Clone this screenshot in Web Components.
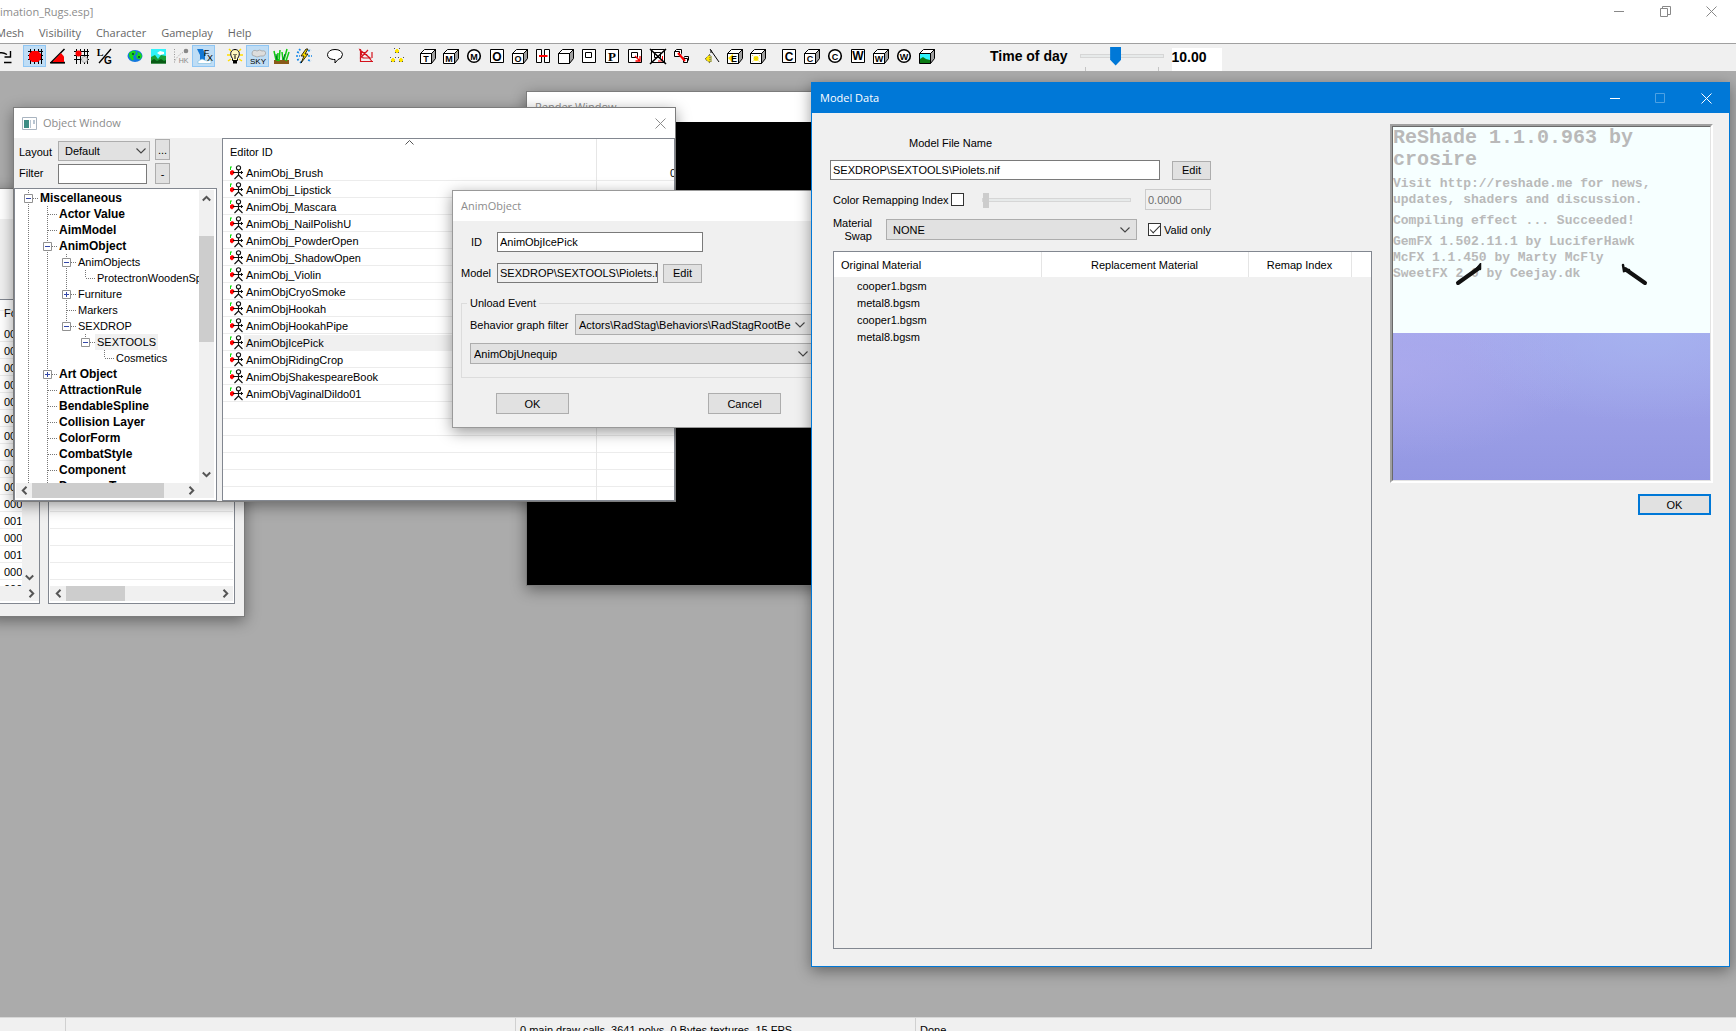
<!DOCTYPE html>
<html lang="en">
<head>
<meta charset="utf-8">
<title>Creation Kit</title>
<style>
html,body{margin:0;height:100%;overflow:hidden}
body{font:11px/14px "Liberation Sans",Arial,sans-serif;color:#000;--face:#f0f0f0;--edge:#828790;--accent:#0078d7;--ui:"Open Sans","Noto Sans",sans-serif}
</style>
</head>
<body>
<kit-app></kit-app>
<script>
const controls = `
*{box-sizing:border-box}
button,input,select{font:inherit;color:inherit;border-radius:0;margin:0;appearance:none;outline:none;min-width:0}
button{background:#e1e1e1;border:1px solid #adadad;padding:0}
input[type=text]{background:#fff;border:1px solid #7a7a7a;padding:0 0 0 2px;height:20px}
input[readonly]{background:var(--face)}
input[type=text]:disabled{border-color:#ccc;background:var(--face);color:#6d6d6d}
select{background:#e1e1e1;border:1px solid #adadad;padding:0 18px 0 6px;height:21px;width:100%}
label{white-space:nowrap}
.combo{display:grid}
.combo>*{grid-area:1/1}
.combo svg{width:10px;height:6px;justify-self:end;align-self:center;margin-right:7px;pointer-events:none}
input[type=checkbox]{width:13px;height:13px;border:1px solid #333;background:#fff;display:grid;place-items:center;flex:none}
input[type=checkbox]:checked::after{content:"";width:9px;height:4px;border:solid #333;border-width:0 0 1px 1px;transform:rotate(-45deg) translate(1px,-1px)}
`;
const chevron = `<svg viewBox="0 0 10 6"><path d="M.5 .5 5 5 9.5 .5" fill="none" stroke="#444" stroke-width="1.1"/></svg>`;

function define(name, css, html, setup) {
  const tpl = document.createElement('template');
  tpl.innerHTML = `<style>${controls}${css}</style>${html}`;
  customElements.define(name, class extends HTMLElement {
    connectedCallback() {
      if (this.shadowRoot) return;
      const root = this.attachShadow({mode: 'open'});
      root.append(tpl.content.cloneNode(true));
      if (setup) setup(this, root);
    }
  });
}

/* ---------- toolbar glyphs ---------- */
const txt = (s, x, y, size, w = 'bold', f = 'Liberation Sans') =>
  `<text x="${x}" y="${y}" font-size="${size}" font-weight="${w}" font-family="${f}" text-anchor="middle" fill="#000">${s}</text>`;
const cube = (inner, front = '#fff') =>
  `<path d="M.5 5.5 4.5 1.5h11l-4 4z" fill="#fff"/><path d="M11.5 5.5l4-4v9l-4 5z" fill="#a0a0a0"/><path d="M.5 5.5h11v10H.5z" fill="${front}"/><path d="M.5 5.5 4.5 1.5h11l-4 4zM11.5 5.5l4-4v9l-4 5zM.5 5.5h11v10H.5z" fill="none" stroke="#000"/>${inner}`;
const box = inner => `<path d="M1.5 1.5h13v13h-13z" fill="#fff" stroke="#000"/>${inner}`;
const ring = s => `<circle cx="8" cy="8" r="6.3" fill="#fff" stroke="#000" stroke-width="1.6"/>${txt(s, 8, 11.5, 9)}`;
const grid = `<path d="M1 3.5h15M1 7.5h15M1 11.5h15M3.5 1v15M7.5 1v15M11.5 1v15M14.5 1v15" stroke="#000" fill="none"/>`;
const star = (x, y) => `<path d="M${x-3} ${y-3}l6 6M${x+3} ${y-3}l-6 6" stroke="#111" stroke-dasharray="1 2"/><path d="M${x-2} ${y}h4M${x} ${y-2}v4" stroke="#ffe600" stroke-width="2"/>`;
const glyphs = {
  redo: `<path d="M-1 8.5Q4 2 11 6.500M14.500 3v6h-6M8 14.500h7.500M1 14.500h3" fill="none" stroke="#000" stroke-width="1.400"/>`,
  snap: grid + `<path d="M5 3h6l3 3v5l-3 3H5l-3-3V6z" fill="#f00"/>`,
  angle: `<path d="M1 14.500 14.500 1M1 14.500h14" stroke="#000" stroke-width="1.500"/><path d="M2.500 14 11 5l3 3.500V14z" fill="#f00"/><path d="M0 14h15v1.500H0z"/>`,
  ref: grid + `<circle cx="5.500" cy="5.500" r="3" fill="#f00"/><circle cx="11.500" cy="11.500" r="3" fill="#ddd" stroke="#999" stroke-width=".6"/>`,
  lg: txt('L', 4, 7.5, 10, 'bold', 'Liberation Serif') + txt('G', 12, 15.5, 10) + `<path d="M15 1 3 15" stroke="#000" stroke-width="1.300"/>`,
  globe: `<ellipse cx="8" cy="8" rx="7.500" ry="6" fill="#1377e0"/><path d="M2 5l4-2.500 3 1-1 3-2 2 1 3-2 1-3-4zM10 3.500l4 2 1 3-2 3-3-1-1-3 2-1z" fill="#18d818"/><path d="M5 5h2v2H5zM11 8h2v2h-2z" fill="#063"/>`,
  land: `<path d="M1 1h15v14H1z" fill="#2ff3fb"/><path d="M7 5l3-2 4 1v2l-4 1z" fill="#fff"/><path d="M1 9l4-2 3 4 3-4 5 1v7.500H1z" fill="#18a038"/><path d="M1 13l3-2 3 2 4-2 3 2 2-1v3.500H1z" fill="#075a14"/>`,
  hk: `<path d="M1.500 1v14M2 12.500q5-8 10-8.500" stroke="#999" stroke-dasharray="1 1.500" fill="none"/><circle cx="13" cy="3" r="2.300" fill="#888"/><text x="10.500" y="15" font-size="7" text-anchor="middle" fill="#888" font-family="Liberation Sans">HK</text>`,
  fx: `<path d="M1 1h6l2 5v9H4V7z" fill="#1377d4"/><path d="M2 13l4-2 5 2 4-1v3.500H2z" fill="#fff" stroke="#7bd" stroke-width=".6"/>` + txt('F', 10.5, 7.5, 9, 'normal') + txt('X', 14, 13, 9, 'normal'),
  bulb: `<path d="M2 1l2 2M14 1l-2 2M0 7h3M13 7h3M1 13l3-2M15 13l-3-2" stroke="#fd0" stroke-width="1.500"/><path d="M5.500 10.500C2 6 4 1.500 8 1.500S14 6 10.500 10.500v2h-5z" fill="#fff8c0" stroke="#000"/><path d="M6.500 6l1.500 1.500L9.500 6M8 8v3" stroke="#000" fill="none"/><path d="M6 13h4v2.500H6z"/>`,
  sky: `<path d="M2 5q1-4 5-2 3-2 5 0 4-1 3.500 3-1 3-5 2-4 2-6 0-3 0-2.500-3z" fill="#ddd" stroke="#999" stroke-width=".7"/>` + txt('SKY', 8, 15.5, 8, 'normal'),
  grass: `<path d="M1 12h15v4H1z" fill="#8a5a1a"/><path d="M1 3l2 9M5 5l-1 8M7 2l-1 11M9 4l1 8M14 1l-3 11M16 4l-3 9M2 8l4 5" stroke="#1c1" stroke-width="1.500"/><path d="M3 6l1 6M12 6l-2 6" stroke="#063"/>`,
  bolt: `<path d="M1 4l3 1M0 8h4M1 12l3-1M12 3l3-1M12 8h4M12 12l3 1M3 1l2 2M4 15l2-2" stroke="#1688e8" stroke-width="1.600" stroke-dasharray="2 1"/><path d="M10 1 5 8h3l-3 7 7-9H9l3-5z" fill="#fd0" stroke="#000" stroke-width=".8"/>`,
  bubble: `<path d="M6.500 11.500Q.5 11 .5 6.500 1.500 1.500 8 1.500t7.500 5Q15 11 11 11.500L8 15V11.500z" fill="#fff" stroke="#000"/>`,
  red: `<path d="M2.500 1v13M2 13.500h13M2 4.500h5l7 9M14 4v6M2 10.500 10 2M2 2l10 8H5z" fill="none" stroke="#d4121c" stroke-width="1.200"/>`,
  stars: star(8, 3) + star(4, 12) + star(12, 12),
  ct: cube(txt('T', 6, 14, 9)), cm: cube(txt('M', 6, 14, 9)), rm: ring('M'),
  bo: box(txt('O', 8, 12.5, 12)), co: cube(txt('O', 6, 14, 9)),
  join: `<path d="M1.500 1.500h5v13h-5zM9.500 1.500h5v13h-5z" fill="#fff" stroke="#000"/><path d="M4 8h8.500" stroke="#f00" stroke-width="2"/>`,
  c: cube(''), sq: box(`<path d="M4.500 4.500h6v5h-6z" fill="none" stroke="#000"/>`),
  bp: box(txt('P', 8, 12.5, 13, 'bold', 'Liberation Serif')),
  sr: box(`<path d="M4.500 4.500h6v5h-6z" fill="none" stroke="#000"/><path d="M8 8l4.500 4.500M13 8v5H8.500" stroke="#f00" fill="none" stroke-width="1.300"/>`),
  sx: box(`<path d="M4.500 4.500h6v5h-6z" fill="none" stroke="#000"/><path d="M8 13h4.500V8" stroke="#f00" fill="none"/><path d="M0 1l16 15M16 1 0 16" stroke="#000" stroke-width="1.600"/>`),
  chain: `<path d="M1.500 3.500h5v5h-5zM1.500 3.500l2-2h5v4l-2 3M10.500 10.500h4v4h-4zM10.500 10.500l1-2h4v4" fill="#fff" stroke="#000"/><path d="M5 5l7 8" stroke="#f00" stroke-width="2"/>`,
  cone: `<path d="M6 1l9 13" stroke="#000"/><path d="M7 2v3" stroke="#000"/><path d="M1 11l5-5v9z" fill="#ffe600" stroke="#444" stroke-dasharray="1 1"/><path d="M7 8v6" stroke="#880"/>`,
  cl: cube(`<path d="M1 10l5-4v9z" fill="#ffe600"/>` + txt('E', 7, 14, 9)),
  cs: cube(`<circle cx="6" cy="10.500" r="2.500" fill="#ffe600"/><path d="M2 7l8 7M10 7l-8 7" stroke="#cb0" stroke-dasharray="1 1.500"/>`),
  bc: box(txt('C', 8, 12.5, 12)), cc: cube(txt('C', 6, 14, 9)), rc: ring('C'),
  bw: box(txt('W', 8, 12, 12)), cw: cube(txt('W', 6, 14, 9)), rw: ring('W'),
  cland: cube(`<path d="M1 11l3-2 3 2 4 1v3H1z" fill="#0a7a14"/>`, '#2ff3fb')
};
define('tool-icon', `:host{display:block}
button{display:grid;place-items:center;width:23px;height:22px;background:none;border:1px solid transparent}
:host([on]) button{background:#bfddf5;border-color:#8fc6f4}
svg{width:16px;height:16px;overflow:visible}`,
  `<button><svg viewBox="0 0 16 16"></svg></button>`,
  (el, r) => {
    r.querySelector('svg').innerHTML = glyphs[el.getAttribute('name')];
    r.querySelector('button').setAttribute('aria-label', el.getAttribute('name'));
  });

define('tool-bar', `:host{display:flex;align-items:flex-start;height:28px;background:var(--face);border-top:1px solid #a0a0a0;overflow:hidden}
.icons{display:flex;gap:8px;padding-top:1px;margin-left:-8px;flex:none}
.g{display:flex}
label,output{font-weight:bold;font-size:14px;line-height:24px}
label{padding:0 12px 0 52px}
.slide{display:flex;flex-direction:column;width:84px}
.ticks{display:flex;justify-content:space-between;padding:0 5px;height:5px}
.ticks i{width:1px;background:#c4c4c4}
input{width:84px;height:23px;background:none;display:block}
input::-webkit-slider-runnable-track{height:4px;border:1px solid #d6d6d6;background:#e7eaea}
input::-webkit-slider-thumb{appearance:none;width:11px;height:19px;margin-top:-8px;background:var(--accent);clip-path:polygon(0 0,100% 0,100% 70%,50% 100%,0 70%)}
output{background:#fff;width:50px;height:24px;line-height:18px;margin:4px 0 0 8px;align-self:flex-start}`,
  `<div class="icons"></div><label for="tod">Time of day</label>
   <div class="slide"><input id="tod" type="range" min="0" max="24" step="0.1" value="10"><div class="ticks"><i></i><i></i></div></div><output for="tod">10.00</output>`,
  (el, r) => {
    const groups = ['redo', 'snap* angle ref lg', 'globe land hk fx*', 'bulb sky* grass bolt', 'bubble', 'red', 'stars',
      'ct cm rm bo co join c sq bp sr sx chain', 'cone cl cs', 'bc cc rc bw cw rw cland'];
    r.querySelector('.icons').innerHTML = groups.map(g => `<div class="g">${g.split(' ').map(n =>
      `<tool-icon name="${n.replace('*', '')}"${n.endsWith('*') ? ' on' : ''}></tool-icon>`).join('')}</div>`).join('');
  });

/* ---------- window frame ---------- */
define('win-frame', `:host{display:flex;flex-direction:column;box-sizing:border-box;border:1px solid #7c7c7c;background:var(--face);box-shadow:0 4px 14px rgba(0,0,0,.4)}
header{display:flex;align-items:center;height:30px;background:#fff;color:#8c8c8c;font:11px/16px var(--ui);padding-left:8px;flex:none}
:host([icon]) header{padding-left:8px}
.ico{display:none;width:15px;height:13px;margin-right:6px}
:host([icon]) .ico{display:block}
h2{font:inherit;margin:0;flex:1;white-space:nowrap}
:host([active]){border-color:var(--accent)}
:host([active]) header{background:var(--accent);color:#fff}
.b{display:none;width:45px;height:30px;place-items:center;background:none;border:0}
.close{width:30px}
:host([closable]) .close,:host([active]) .b{display:grid}
:host([active]) .close{width:46px}
svg{display:block;width:11px;height:11px;fill:none;stroke:currentColor}
.max{opacity:.3}
.body{flex:1;display:flex;min-height:0}
::slotted(*){flex:1;min-width:0}`,
  `<header><svg class="ico" style="width:15px" viewBox="0 0 15 13"><path d="M.5.500h14v12H.500z" fill="#fff" stroke="#a9b4c0"/><path d="M2 3h5v8H2z" fill="#3c8c84" stroke="none"/><path d="M8 3h1v8H8zM11 3h2v4h-2z" fill="#b9c6d2" stroke="none"/></svg>
   <h2></h2>
   <button class="b" aria-label="Minimize"><svg viewBox="0 0 11 11"><path d="M0 5.500h10"/></svg></button>
   <button class="b max" aria-label="Maximize"><svg viewBox="0 0 11 11"><path d="M.5.500h9v9h-9z"/></svg></button>
   <button class="b close" aria-label="Close"><svg viewBox="0 0 11 11"><path d="M.5.500l10 10M10.500.500l-10 10"/></svg></button>
   </header><div class="body"><slot></slot></div>`,
  (el, r) => { r.querySelector('h2').textContent = el.getAttribute('caption') || ''; });

/* ---------- scroll bar ---------- */
define('scroll-bar', `:host{display:flex;background:var(--face);height:15px;flex:none}
:host([vertical]){flex-direction:column;width:15px;height:auto}
button{width:16px;height:15px;background:none;border:0;display:grid;place-items:center;flex:none}
:host([vertical]) button{width:15px;height:17px}
:host([vertical]) svg{transform:rotate(90deg)}
svg{width:7px;height:9px;fill:none;stroke:#555;stroke-width:2}
.t{flex:1;display:flex;min-width:0;min-height:0}
:host([vertical]) .t{flex-direction:column}
i{background:#cdcdcd;flex:none}`,
  `<button aria-label="Back"><svg viewBox="0 0 7 9"><path d="M5.500.800 1.800 4.500 5.500 8.200"/></svg></button><div class="t"><i></i></div><button aria-label="Forward"><svg viewBox="0 0 7 9"><path d="M1.500.800 5.200 4.500 1.500 8.200"/></svg></button>`,
  (el, r) => {
    const i = r.querySelector('i'), v = el.hasAttribute('vertical'), size = el.getAttribute('thumb') || 0;
    i.style[v ? 'marginTop' : 'marginLeft'] = (el.getAttribute('at') || 0) + 'px';
    i.style[v ? 'height' : 'width'] = size + 'px';
  });

/* ---------- tree ---------- */
const treeRows = [
  ['M', 'Miscellaneous', 1], ['|T', 'Actor Value', 1], ['|T', 'AimModel', 1], ['|M', 'AnimObject', 1],
  ['||M', 'AnimObjects'], ['|||L', 'ProtectronWoodenSpoon'], ['||P', 'Furniture'], ['||T', 'Markers'],
  ['||m', 'SEXDROP'], ['|| m', 'SEXTOOLS', 2], ['||  L', 'Cosmetics'], ['|P', 'Art Object', 1],
  ['|T', 'AttractionRule', 1], ['|T', 'BendableSpline', 1], ['|T', 'Collision Layer', 1], ['|T', 'ColorForm', 1],
  ['|T', 'CombatStyle', 1], ['|T', 'Component', 1], ['|T', 'Damage Type', 1]];
const treeCell = c => {
  const dash = 'stroke="#777" stroke-dasharray="1 1" fill="none"';
  let s = '';
  if ('|TMP'.includes(c)) s += `<path d="M9.500 0v16" ${dash}/>`;
  if ('Lm'.includes(c)) s += `<path d="M9.500 0v8" ${dash}/>`;
  if ('TLMPm'.includes(c)) s += `<path d="M10 8.500h9" ${dash}/>`;
  if ('MPm'.includes(c)) s += `<path d="M5.500 4.500h8v8h-8z" fill="#fff" stroke="#919191"/><path d="M7 8.500h5${c === 'P' ? 'M9.500 6v5' : ''}" stroke="#3347a8"/>`;
  return `<svg viewBox="0 0 19 16">${s}</svg>`;
};
define('tree-view', `:host{display:grid;grid-template:minmax(0,1fr) 15px/minmax(0,1fr) 15px;border:1px solid var(--edge);background:#fff;padding:1px 2px 2px 1px;min-height:0}
ul{list-style:none;margin:0;padding:0 0 0 3px;overflow:hidden;min-height:0}
li{display:flex;height:16px;line-height:16px;white-space:nowrap}
svg{width:19px;height:16px;flex:none}
span{padding:0 2px}
.bold{font-weight:bold;font-size:12px}
.sel span{background:var(--face)}
.corner{background:var(--face)}`,
  `<ul></ul><scroll-bar vertical at="29" thumb="106"></scroll-bar><scroll-bar at="0" thumb="132"></scroll-bar><div class="corner"></div>`,
  (el, r) => {
    r.querySelector('ul').innerHTML = treeRows.map(([c, t, f]) =>
      `<li class="${f === 1 ? 'bold' : f === 2 ? 'sel' : ''}">${[...c].map(treeCell).join('')}<span>${t}</span></li>`).join('');
  });

/* ---------- object window ---------- */
const actor = `<svg viewBox="0 0 15 15"><path d="M1 2h2M1.500 2v3" stroke="#1d1"/><path d="M1 6.500 3 5l2 1 .500 2L3 10.500 1 9z" fill="#f00"/><g fill="none" stroke="#111" stroke-width="1.100"><circle cx="9.500" cy="2.800" r="2.100"/><path d="M9.500 5v5M4 7.500h10M12.500 6v3M9.500 10 5.500 14M9.500 10l4 4"/></g></svg>`;
define('object-list', `:host{display:flex;flex-direction:column;border:1px solid var(--edge);background:#fff;min-width:0;overflow:hidden}
.area{flex:1;position:relative;background:linear-gradient(#fff,#fff) 0 0/100% 25px no-repeat,repeating-linear-gradient(#fff 0 16px,#ececec 16px 17px) 0 25px}
.area::after{content:"";position:absolute;right:77px;top:0;bottom:0;width:1px;background:#e6e6e6}
table{border-collapse:collapse;table-layout:fixed;width:100%}
th{height:25px;padding:0 0 0 7px;text-align:left;font-weight:normal;position:relative}
th svg{position:absolute;left:50%;top:1px;width:9px;height:5px;margin-left:-4px}
td{height:17px;padding:0}
.r{display:flex;align-items:center;height:16px;padding-left:6px}
.r svg{width:15px;height:15px;flex:none}
.r span{flex:1;padding-left:2px;line-height:16px}
.sel span{background:var(--face)}
.n{width:79px;text-align:left;padding-left:75px;overflow:hidden}`,
  `<div class="area"><table><thead><tr><th>Editor ID<svg viewBox="0 0 9 5"><path d="M.5 4.500l4-4 4 4" fill="none" stroke="#555"/></svg></th><th class="n"></th></tr></thead><tbody></tbody></table></div>`,
  (el, r) => {
    const names = ['AnimObj_Brush', 'AnimObj_Lipstick', 'AnimObj_Mascara', 'AnimObj_NailPolishU', 'AnimObj_PowderOpen', 'AnimObj_ShadowOpen', 'AnimObj_Violin', 'AnimObjCryoSmoke', 'AnimObjHookah', 'AnimObjHookahPipe', 'AnimObjIcePick', 'AnimObjRidingCrop', 'AnimObjShakespeareBook', 'AnimObjVaginalDildo01'];
    r.querySelector('tbody').innerHTML = names.map((n, i) =>
      `<tr${i === 10 ? ' class="sel"' : ''}><td><div class="r">${actor}<span>${n}</span></div></td><td class="n">${i ? '' : '0'}</td></tr>`).join('');
  });
define('object-window', `:host{display:flex;gap:5px}
.left{width:203px;display:flex;flex-direction:column;flex:none}
form{display:grid;grid-template-columns:39px 92px 20px;row-gap:2px;align-content:start;padding:1px 0 0 5px;height:50px}
label{line-height:20px;height:22px}
label:first-child{line-height:26px}
.combo{padding-top:2px;height:22px}
form input[type=text]{width:89px;margin-top:1px}
form select{height:20px}
form button{width:15px;height:21px;margin-left:5px}
.combo svg{margin-right:4px}
tree-view{flex:1}
object-list{flex:1}`,
  `<div class="left"><form>
    <label for="lay">Layout</label><div class="combo"><select id="lay"><option>Default</option></select>${chevron}</div><button type="button">...</button>
    <label for="fil">Filter</label><input id="fil" type="text"><button type="button">-</button></form>
    <tree-view></tree-view></div><object-list></object-list>`);

/* ---------- cell window behind ---------- */
define('cell-window', `:host{display:flex;gap:8px;padding:80px 9px 12px 0}
.l,.r{display:flex;flex-direction:column;background:#fff;border:1px solid var(--edge);min-height:0}
.l{width:40px;border-left:0;flex:none;padding-bottom:2px}
.r{flex:1;padding:0 1px 2px}
.mid{flex:1;display:flex;min-height:0}
table{border-collapse:collapse;width:22px;table-layout:fixed}
th{height:25px;text-align:left;font-weight:normal;padding:0 0 0 4px}
td{height:17px;padding:0 0 0 4px}
.clip{width:22px;overflow:hidden;flex:none;background:repeating-linear-gradient(#fff 0 16px,#ececec 16px 17px) 0 25px}
.lines{flex:1;background:repeating-linear-gradient(#fff 0 7px,#ececec 7px 8px,#fff 8px 17px)}
.fill{background:var(--face);flex:1;display:flex}
.h{justify-content:flex-end;margin-left:-20px}`,
  `<div class="l"><div class="mid"><div class="clip"><table><thead><tr><th>Fo</th></tr></thead><tbody></tbody></table></div><div class="fill"><scroll-bar vertical></scroll-bar></div></div><scroll-bar class="h"></scroll-bar></div>
   <div class="r"><div class="lines"></div><scroll-bar at="0" thumb="59"></scroll-bar></div>`,
  (el, r) => {
    r.querySelector('tbody').innerHTML = Array.from({length: 16}, (_, i) => `<tr><td>${i === 11 || i === 13 ? '001' : '000'}</td></tr>`).join('');
  });

/* ---------- AnimObject dialog ---------- */
define('anim-dialog', `:host{display:flex;flex-direction:column;padding:11px 0 12px 8px}
.row{display:flex;align-items:center}
.id{padding-left:10px}
.id label{width:26px}.id input{width:206px}
.model{margin-top:11px}
.model label{width:36px}
.model input{width:161px;margin-right:5px}
.model button{width:39px;height:19px}
fieldset{margin:13px -6px 0 0;border:1px solid #dcdcdc;padding:4px 0 11px 8px;min-width:0;height:82px}
legend{padding:0 3px;margin-left:-3px;line-height:14px}
.combo select{padding-left:3px}
.f .combo{width:237px}
.f label{width:105px}
.e{margin-top:8px;width:345px}
.btns{display:flex;gap:139px;padding-left:35px;margin-top:15px}
.btns button{width:73px;height:21px}`,
  `<div class="row id"><label for="id">ID</label><input id="id" type="text" value="AnimObjIcePick"></div>
   <div class="row model"><label for="mo">Model</label><input id="mo" type="text" readonly value="SEXDROP\\SEXTOOLS\\Piolets.nif"><button>Edit</button></div>
   <fieldset><legend>Unload Event</legend>
   <div class="row f"><label for="bg">Behavior graph filter</label><div class="combo"><select id="bg"><option>Actors\\RadStag\\Behaviors\\RadStagRootBe</option></select>${chevron}</div></div>
   <div class="combo e"><select aria-label="Event"><option>AnimObjUnequip</option></select>${chevron}</div></fieldset>
   <div class="btns"><button>OK</button><button>Cancel</button></div>`);

/* ---------- Model Data ---------- */
define('model-preview', `:host{display:block;box-sizing:border-box;border:2px solid;border-color:#a0a0a0 #fff #fff #a0a0a0;height:359px}
.v{height:100%;border:1px solid;border-color:#696969 #e3e3e3 #e3e3e3 #696969;position:relative;overflow:hidden;background:radial-gradient(60% 60% at 80% 0,rgba(166,180,240,.8),transparent),radial-gradient(60% 60% at 0 25%,rgba(176,172,238,.6),transparent),linear-gradient(#a4a8ec,#9397e2);background-position:0 206px;background-repeat:no-repeat;background-size:100% 148px}
.sky{background:#f6ffff;height:206px;color:#b9b9b9;font:bold 13px/16px "Liberation Mono","Courier New",monospace}
p{margin:0 0 5px;white-space:pre}
.big{font-size:20px;line-height:22px}
svg{position:absolute;left:0;top:136px;width:100%;height:24px}`,
  `<div class="v"><div class="sky"><p class="big">ReShade 1.1.0.963 by
crosire</p><p>Visit http://reshade.me for news,
updates, shaders and discussion.</p><p>Compiling effect ... Succeeded!</p><p>GemFX 1.502.11.1 by LuciferHawk
McFX 1.1.450 by Marty McFly
SweetFX 2.0 by Ceejay.dk</p></div>
   <svg viewBox="0 0 317 24" preserveAspectRatio="xMinYMin"><g fill="none" stroke="#111" stroke-linecap="round"><path d="M65 20 86 5" stroke-width="4"/><path d="M82 8l5-6v4" stroke-width="2.500"/><path d="M252 20 232 6" stroke-width="4"/><path d="M230 2l1 6 5-1" stroke-width="2.500"/></g></svg></div>`);
define('material-list', `:host{display:block;border:1px solid var(--edge);min-height:0}
table{border-collapse:collapse;table-layout:fixed;width:100%}
th{background:#fff;font-weight:normal;height:25px;padding:0;border-right:1px solid #e5e5e5}
th:first-child{text-align:left;padding-left:7px}
th:last-child{border:0}
td{height:17px;padding:0 0 0 23px}`,
  `<table><colgroup><col style="width:207px"><col style="width:207px"><col style="width:103px"><col></colgroup>
   <thead><tr><th>Original Material</th><th>Replacement Material</th><th>Remap Index</th><th></th></tr></thead>
   <tbody><tr><td>cooper1.bgsm</td></tr><tr><td>metal8.bgsm</td></tr><tr><td>cooper1.bgsm</td></tr><tr><td>metal8.bgsm</td></tr></tbody></table>`);
define('model-dialog', `:host{display:flex;gap:18px;padding:0 16px 17px 18px}
.left{flex:1;display:flex;flex-direction:column;min-width:0;padding-top:23px}
.row{display:flex;align-items:center;height:21px;margin-top:9px;flex:none}
.cap{padding-left:79px;display:block}
.file{margin-top:10px;height:20px}
.file input{width:330px;margin-right:12px}
.file button{width:39px;height:19px}
.remap{padding-left:3px}
.remap label{width:118px}
.remap input[type=range]{width:149px;height:15px;margin:0 14px 0 18px;background:none;border:0}
input::-webkit-slider-runnable-track{height:4px;border:1px solid #d6d6d6;background:#e7eaea}
input::-webkit-slider-thumb{appearance:none;width:6px;height:15px;margin-top:-6px;background:#ccc}
.remap input[type=text]{width:66px;height:21px}
.swap .m{width:42px;text-align:right;line-height:13px;white-space:normal;margin-right:14px}
.swap .combo{width:251px;margin-right:11px}
.swap .v{margin-left:3px}
material-list{flex:1;margin:11px 0 0 3px}
.right{width:323px;flex:none;display:flex;flex-direction:column;padding-top:11px;align-items:stretch}
.ok{align-self:flex-end;width:73px;height:21px;border:2px solid var(--accent);margin:11px 2px 0 0}`,
  `<div class="left"><label class="cap" for="mf">Model File Name</label>
   <div class="row file"><input id="mf" type="text" value="SEXDROP\\SEXTOOLS\\Piolets.nif"><button>Edit</button></div>
   <div class="row remap"><label for="cr">Color Remapping Index</label><input id="cr" type="checkbox"><input type="range" aria-label="Index" value="0" disabled><input type="text" aria-label="Index value" value="0.0000" disabled></div>
   <div class="row swap"><label class="m" for="sw">Material Swap</label><div class="combo"><select id="sw"><option>NONE</option></select>${chevron}</div><input id="vo" type="checkbox" checked><label class="v" for="vo">Valid only</label></div>
   <material-list></material-list></div>
   <div class="right"><model-preview></model-preview><button class="ok">OK</button></div>`);

/* ---------- application shell ---------- */
define('app-header', `:host{display:block;background:#fff;height:43px;font:11px/16px var(--ui);overflow:hidden}
.t{display:flex;align-items:center;height:23px;color:#8c8c8c;padding-right:2px}
.t span{flex:1}
.t button{width:46px;height:22px;display:grid;place-items:center;background:none;border:0}
.t svg{width:11px;height:11px;fill:none;stroke:#888}
nav{display:flex;gap:15px;margin-left:-4px;height:20px;align-items:center}
nav button{background:none;border:0;color:#666}`,
  `<div class="t"><span>imation_Rugs.esp]</span>
   <button aria-label="Minimize"><svg viewBox="0 0 11 11"><path d="M0 5.500h10"/></svg></button>
   <button aria-label="Restore"><svg viewBox="0 0 11 11"><path d="M.5 2.500h7v8h-7zM2.500 2V.500h8v8H8"/></svg></button>
   <button aria-label="Close"><svg viewBox="0 0 11 11"><path d="M.5.500l10 10M10.500.500l-10 10"/></svg></button></div>
   <nav><button>Mesh</button><button>Visibility</button><button>Character</button><button>Gameplay</button><button>Help</button></nav>`);
define('status-bar', `:host{display:flex;height:14px;background:var(--face);border-top:1px solid #d7d7d7;overflow:hidden;flex:none;box-sizing:border-box}
span{height:20px;padding:5px 0 0 4px;border-right:1px solid #d0d0d0;white-space:nowrap;flex:none}
span:last-child{border:0;flex:1}`,
  `<span style="width:66px"></span><span style="width:450px"></span><span style="width:400px">0 main draw calls, 3641 polys, 0 Bytes textures, 15 FPS</span><span>Done</span>`);
define('kit-app', `:host{display:flex;flex-direction:column;height:100vh}
main{flex:1;position:relative;background:#ababab;overflow:hidden;min-height:0}
win-frame{position:absolute}
.cell{left:-12px;top:117px;width:257px;height:429px}
.cell cell-window{margin-left:11px}
.render{left:526px;top:20px;width:360px;height:495px}
.render div{background:#000}
.obj{left:13px;top:36px;width:663px;height:395px}
.anim{left:452px;top:119px;width:380px;height:238px;border-color:#999}
.model{left:811px;top:11px;width:919px;height:885px}`,
  `<app-header></app-header><tool-bar></tool-bar>
   <main>
    <win-frame class="cell"><cell-window></cell-window></win-frame>
    <win-frame class="render" caption="Render Window"><div></div></win-frame>
    <win-frame class="obj" caption="Object Window" icon closable><object-window></object-window></win-frame>
    <win-frame class="anim" caption="AnimObject"><anim-dialog></anim-dialog></win-frame>
    <win-frame class="model" caption="Model Data" active><model-dialog></model-dialog></win-frame>
   </main><status-bar></status-bar>`);
</script>
</body>
</html>
